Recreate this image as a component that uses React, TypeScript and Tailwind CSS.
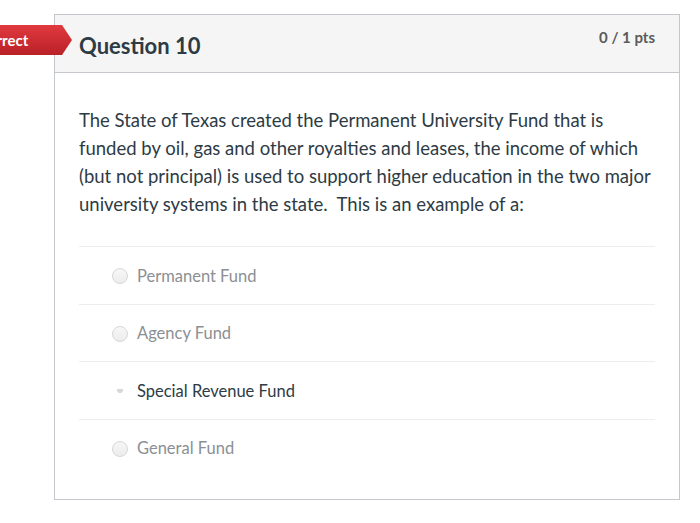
import React from 'react';

const answers = [
  { label: 'Permanent Fund', selected: false },
  { label: 'Agency Fund', selected: false },
  { label: 'Special Revenue Fund', selected: true },
  { label: 'General Fund', selected: false },
];

function Radio({ selected }: { selected: boolean }) {
  if (selected) {
    return (
      <span className="flex h-[16px] w-[16px] items-center justify-center">
        <span className="h-[4px] w-[6px] rounded-b-full bg-[#d6d9dc]" />
      </span>
    );
  }
  return (
    <span className="block h-[16px] w-[16px] rounded-full border border-[#d4d7da] bg-gradient-to-b from-[#f7f7f7] to-[#ececec]" />
  );
}

export default function App() {
  return (
    <main
      className="relative h-[523px] w-[700px] overflow-hidden bg-white"
      style={{ fontFamily: 'Lato, "Open Sans", sans-serif' }}
    >
      {/* result tab */}
      <div className="absolute left-[-44px] top-[25px] z-10 flex h-[30px] items-center">
        <div className="flex h-full items-center bg-gradient-to-b from-[#e0393f] to-[#b92127] pl-3 pr-[34px] text-[15px] font-bold text-white">
          Incorrect
        </div>
        <svg width="10" height="30" viewBox="0 0 10 30" className="block">
          <defs>
            <linearGradient id="tabg" x1="0" y1="0" x2="0" y2="1">
              <stop offset="0" stopColor="#e0393f" />
              <stop offset="1" stopColor="#b92127" />
            </linearGradient>
          </defs>
          <polygon points="0,0 10,15 0,30" fill="url(#tabg)" />
        </svg>
      </div>

      <div className="ml-[54px] mt-[14px] flex h-[486px] w-[626px] flex-col border border-[#c4c8cc]">
        {/* header */}
        <div className="flex h-[58px] items-start justify-between border-b border-[#c4c8cc] bg-[#f5f5f5] pl-[24px] pr-[24px]">
          <h2 className="mt-[18px] text-[22px] font-bold leading-[26px] text-[#2d3b45]">Question 10</h2>
          <div className="mt-[12px] text-[15px] font-bold leading-[20px] text-[#5b5b5b]">0 / 1 pts</div>
        </div>

        {/* body */}
        <div className="px-[24px] pt-[33px]">
          <p className="text-[18.5px] leading-[28px] text-[#2d3b45]">
            The State of Texas created the Permanent University Fund that is funded by oil, gas and other royalties and
            leases, the income of which (but not principal) is used to support higher education in the two major
            university systems in the state.&nbsp; This is an example of a:
          </p>

          <div className="mt-[28px]">
            {answers.map((a) => (
              <div
                key={a.label}
                className="flex h-[57.5px] items-center gap-[9px] border-t border-[#ebedee] pl-[33px] pt-[2px]"
              >
                <Radio selected={a.selected} />
                <span
                  className={`text-[16.5px] ${a.selected ? 'text-[#2d3b45]' : 'text-[#8b8f93]'}`}
                >
                  {a.label}
                </span>
              </div>
            ))}
          </div>
        </div>
      </div>
    </main>
  );
}
